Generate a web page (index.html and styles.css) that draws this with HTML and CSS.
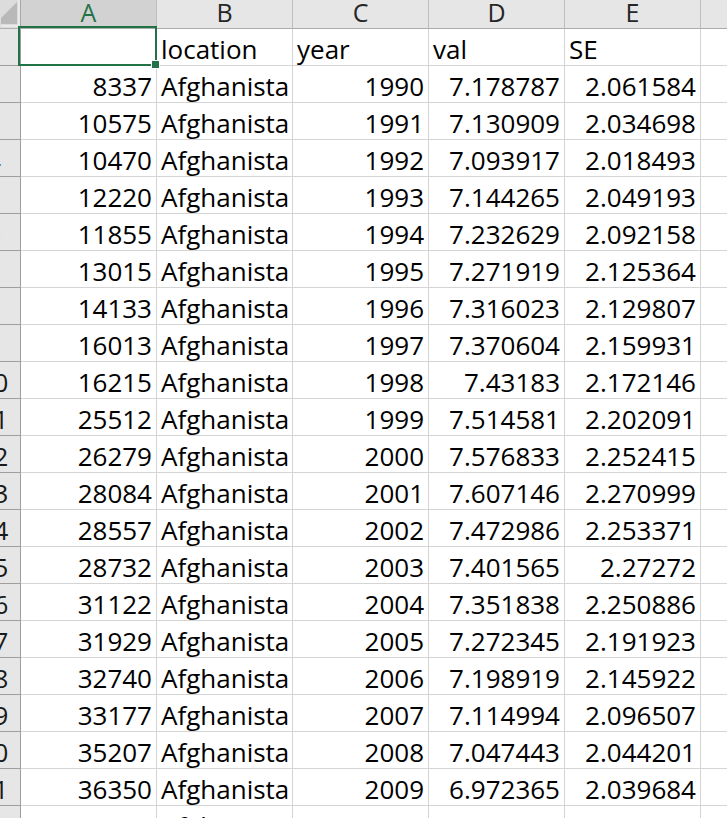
FILE: index.html
```html
<!DOCTYPE html>
<html>
<head>
<meta charset="utf-8">
<link rel="stylesheet" href="styles.css">
</head>
<body>
<div class="sheet">
  <div class="corner"><svg class="corner-tri" width="20" height="29" viewBox="0 0 20 29"><rect x="0" y="0" width="20" height="29" fill="#dcdcdc"/><polygon points="16,2 16,24 -6,24" fill="#b9b9b9"/><rect x="17" y="0" width="2" height="29" fill="#e9e9e9"/><rect x="0" y="25" width="19" height="2" fill="#e9e9e9"/></svg></div>
  <div class="ch sel">A</div><div class="ch">B</div><div class="ch">C</div><div class="ch">D</div><div class="ch">E</div><div class="ch"></div>

  <div class="rh">1</div><div class="c active"><span class="selbox"></span><span class="handle"></span></div><div class="c t">location</div><div class="c t">year</div><div class="c t">val</div><div class="c t">SE</div><div class="c"></div>
  <div class="rh">2</div><div class="c n">8337</div><div class="c t">Afghanista</div><div class="c n">1990</div><div class="c n">7.178787</div><div class="c n">2.061584</div><div class="c"></div>
  <div class="rh">3</div><div class="c n">10575</div><div class="c t">Afghanista</div><div class="c n">1991</div><div class="c n">7.130909</div><div class="c n">2.034698</div><div class="c"></div>
  <div class="rh">4</div><div class="c n">10470</div><div class="c t">Afghanista</div><div class="c n">1992</div><div class="c n">7.093917</div><div class="c n">2.018493</div><div class="c"></div>
  <div class="rh">5</div><div class="c n">12220</div><div class="c t">Afghanista</div><div class="c n">1993</div><div class="c n">7.144265</div><div class="c n">2.049193</div><div class="c"></div>
  <div class="rh">6</div><div class="c n">11855</div><div class="c t">Afghanista</div><div class="c n">1994</div><div class="c n">7.232629</div><div class="c n">2.092158</div><div class="c"></div>
  <div class="rh">7</div><div class="c n">13015</div><div class="c t">Afghanista</div><div class="c n">1995</div><div class="c n">7.271919</div><div class="c n">2.125364</div><div class="c"></div>
  <div class="rh">8</div><div class="c n">14133</div><div class="c t">Afghanista</div><div class="c n">1996</div><div class="c n">7.316023</div><div class="c n">2.129807</div><div class="c"></div>
  <div class="rh">9</div><div class="c n">16013</div><div class="c t">Afghanista</div><div class="c n">1997</div><div class="c n">7.370604</div><div class="c n">2.159931</div><div class="c"></div>
  <div class="rh">10</div><div class="c n">16215</div><div class="c t">Afghanista</div><div class="c n">1998</div><div class="c n">7.43183</div><div class="c n">2.172146</div><div class="c"></div>
  <div class="rh">11</div><div class="c n">25512</div><div class="c t">Afghanista</div><div class="c n">1999</div><div class="c n">7.514581</div><div class="c n">2.202091</div><div class="c"></div>
  <div class="rh">12</div><div class="c n">26279</div><div class="c t">Afghanista</div><div class="c n">2000</div><div class="c n">7.576833</div><div class="c n">2.252415</div><div class="c"></div>
  <div class="rh">13</div><div class="c n">28084</div><div class="c t">Afghanista</div><div class="c n">2001</div><div class="c n">7.607146</div><div class="c n">2.270999</div><div class="c"></div>
  <div class="rh">14</div><div class="c n">28557</div><div class="c t">Afghanista</div><div class="c n">2002</div><div class="c n">7.472986</div><div class="c n">2.253371</div><div class="c"></div>
  <div class="rh">15</div><div class="c n">28732</div><div class="c t">Afghanista</div><div class="c n">2003</div><div class="c n">7.401565</div><div class="c n">2.27272</div><div class="c"></div>
  <div class="rh">16</div><div class="c n">31122</div><div class="c t">Afghanista</div><div class="c n">2004</div><div class="c n">7.351838</div><div class="c n">2.250886</div><div class="c"></div>
  <div class="rh">17</div><div class="c n">31929</div><div class="c t">Afghanista</div><div class="c n">2005</div><div class="c n">7.272345</div><div class="c n">2.191923</div><div class="c"></div>
  <div class="rh">18</div><div class="c n">32740</div><div class="c t">Afghanista</div><div class="c n">2006</div><div class="c n">7.198919</div><div class="c n">2.145922</div><div class="c"></div>
  <div class="rh">19</div><div class="c n">33177</div><div class="c t">Afghanista</div><div class="c n">2007</div><div class="c n">7.114994</div><div class="c n">2.096507</div><div class="c"></div>
  <div class="rh">20</div><div class="c n">35207</div><div class="c t">Afghanista</div><div class="c n">2008</div><div class="c n">7.047443</div><div class="c n">2.044201</div><div class="c"></div>
  <div class="rh">21</div><div class="c n">36350</div><div class="c t">Afghanista</div><div class="c n">2009</div><div class="c n">6.972365</div><div class="c n">2.039684</div><div class="c"></div>
  <div class="rh">22</div><div class="c n">36757</div><div class="c t">Afghanista</div><div class="c n">2010</div><div class="c n">6.917343</div><div class="c n">2.003044</div><div class="c"></div>
</div>
</body>
</html>
```

FILE: styles.css
```css
html, body {
  margin: 0;
  padding: 0;
  background: #ffffff;
  overflow: hidden;
  width: 727px;
  height: 818px;
}

.sheet {
  margin-left: -33px;
  display: grid;
  grid-template-columns: 54px repeat(6, 136px);
  grid-template-rows: 29px;
  grid-auto-rows: 37px;
  font-family: "Open Sans", "Liberation Sans", sans-serif;
  color: #000000;
}

.corner {
  background: #dcdcdc;
  border-right: 1px solid #a8a8a8;
  border-bottom: 1px solid #b0b0b0;
  box-sizing: border-box;
  display: flex;
  justify-content: flex-end;
  overflow: hidden;
}

.corner-tri {
  display: block;
  flex: none;
  margin-right: -1px;
}

.ch {
  box-sizing: border-box;
  background: #e6e6e6;
  border-right: 1px solid #bdbdbd;
  border-bottom: 1px solid #ababab;
  font-size: 25px;
  line-height: 24px;
  text-align: center;
  color: #262626;
  overflow: hidden;
}

.ch.sel {
  background: #d2d2d2;
  color: #217346;
}

.rh {
  box-sizing: border-box;
  background: #e6e6e6;
  border-right: 1px solid #9e9e9e;
  border-bottom: 1px solid #9e9e9e;
  font-size: 26px;
  line-height: 30px;
  padding-top: 5px;
  text-align: center;
  color: #1a1a1a;
  overflow: hidden;
}

.c {
  box-sizing: border-box;
  border-right: 1px solid #d4d4d4;
  border-bottom: 1px solid #d4d4d4;
  font-size: 26px;
  line-height: 30px;
  padding: 5px 4px 0 4px;
  white-space: nowrap;
  overflow: hidden;
}

.n {
  text-align: right;
}

.t {
  text-align: left;
}

.active {
  position: relative;
  overflow: visible;
  z-index: 2;
}

.selbox {
  position: absolute;
  left: -3px;
  top: -3px;
  width: 139px;
  height: 40px;
  box-sizing: border-box;
  border: 2px solid #217346;
}

.handle {
  position: absolute;
  left: 130px;
  top: 31px;
  width: 7px;
  height: 7px;
  background: #217346;
  border: 1px solid #ffffff;
}
```
